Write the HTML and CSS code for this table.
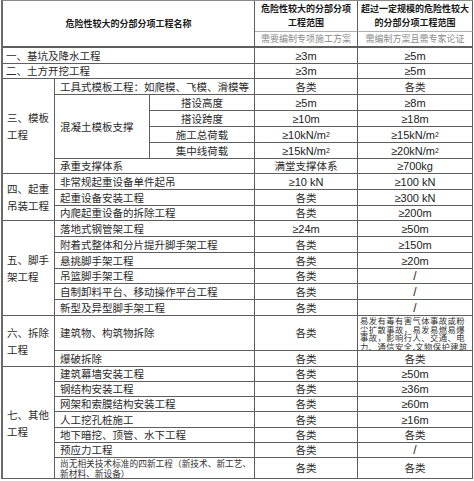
FILE: index.html
```html
<!DOCTYPE html>
<html lang="zh-CN">
<head>
<meta charset="utf-8">
<title>危险性较大的分部分项工程</title>
<link rel="stylesheet" href="styles.css">
</head>
<body>
<div class="sheet">
  <div class="cell hd s3 r2">危险性较大的分部分项工程名称</div>
  <div class="cell hd hd2">危险性较大的分部分项<br>工程范围</div>
  <div class="cell hd hd2">超过一定规模的危险性较大<br>的分部分项工程范围</div>
  <div class="cell sub">需要编制专项施工方案</div>
  <div class="cell sub">需编制方案且需专家论证</div>

  <div class="cell top s3">一、基坑及降水工程</div>
  <div class="cell num">≥3m</div>
  <div class="cell num">≥5m</div>

  <div class="cell top s3">二、土方开挖工程</div>
  <div class="cell num">≥3m</div>
  <div class="cell num">≥5m</div>

  <div class="cell cat r6">三、模板工程</div>
  <div class="cell nm s2">工具式模板工程：如爬模、飞模、滑模等</div>
  <div class="cell ctr">各类</div>
  <div class="cell ctr">各类</div>
  <div class="cell nm r4">混凝土模板支撑</div>
  <div class="cell ctr">搭设高度</div>
  <div class="cell num">≥5m</div>
  <div class="cell num">≥8m</div>
  <div class="cell ctr">搭设跨度</div>
  <div class="cell num">≥10m</div>
  <div class="cell num">≥18m</div>
  <div class="cell ctr">施工总荷载</div>
  <div class="cell num">≥10kN/m<sup>2</sup></div>
  <div class="cell num">≥15kN/m<sup>2</sup></div>
  <div class="cell ctr">集中线荷载</div>
  <div class="cell num">≥15kN/m<sup>2</sup></div>
  <div class="cell num">≥20kN/m<sup>2</sup></div>
  <div class="cell nm s2">承重支撑体系</div>
  <div class="cell ctr">满堂支撑体系</div>
  <div class="cell num">≥700kg</div>

  <div class="cell cat r3">四、起重吊装工程</div>
  <div class="cell nm s2">非常规起重设备单件起吊</div>
  <div class="cell num">≥10 kN</div>
  <div class="cell num">≥100 kN</div>
  <div class="cell nm s2">起重设备安装工程</div>
  <div class="cell ctr">各类</div>
  <div class="cell num">≥300 kN</div>
  <div class="cell nm s2">内爬起重设备的拆除工程</div>
  <div class="cell ctr">各类</div>
  <div class="cell num">≥200m</div>

  <div class="cell cat r6">五、脚手架工程</div>
  <div class="cell nm s2">落地式钢管架工程</div>
  <div class="cell num">≥24m</div>
  <div class="cell num">≥50m</div>
  <div class="cell nm s2">附着式整体和分片提升脚手架工程</div>
  <div class="cell ctr">各类</div>
  <div class="cell num">≥150m</div>
  <div class="cell nm s2">悬挑脚手架工程</div>
  <div class="cell ctr">各类</div>
  <div class="cell num">≥20m</div>
  <div class="cell nm s2">吊篮脚手架工程</div>
  <div class="cell ctr">各类</div>
  <div class="cell num slash">/</div>
  <div class="cell nm s2">自制卸料平台、移动操作平台工程</div>
  <div class="cell ctr">各类</div>
  <div class="cell num slash">/</div>
  <div class="cell nm s2">新型及异型脚手架工程</div>
  <div class="cell ctr">各类</div>
  <div class="cell num slash">/</div>

  <div class="cell cat r2">六、拆除工程</div>
  <div class="cell nm s2">建筑物、构筑物拆除</div>
  <div class="cell ctr">各类</div>
  <div class="cell note"><span class="note-text">易发有毒有害气体事故或粉<br>尘扩散事故，易发易燃易爆<br>事故，影响行人、交通、电<br>力、通信安全,文物保护建筑</span></div>
  <div class="cell nm s2">爆破拆除</div>
  <div class="cell ctr">各类</div>
  <div class="cell ctr">各类</div>

  <div class="cell cat r7">七、其他工程</div>
  <div class="cell nm s2">建筑幕墙安装工程</div>
  <div class="cell ctr">各类</div>
  <div class="cell num">≥50m</div>
  <div class="cell nm s2">钢结构安装工程</div>
  <div class="cell ctr">各类</div>
  <div class="cell num">≥36m</div>
  <div class="cell nm s2">网架和索膜结构安装工程</div>
  <div class="cell ctr">各类</div>
  <div class="cell num">≥60m</div>
  <div class="cell nm s2">人工挖孔桩施工</div>
  <div class="cell ctr">各类</div>
  <div class="cell num">≥16m</div>
  <div class="cell nm s2">地下暗挖、顶管、水下工程</div>
  <div class="cell ctr">各类</div>
  <div class="cell ctr">各类</div>
  <div class="cell nm s2">预应力工程</div>
  <div class="cell ctr">各类</div>
  <div class="cell num slash">/</div>
  <div class="cell nm s2 small"><span class="small-text">尚无相关技术标准的四新工程（新技术、新工艺、<br>新材料、新设备）</span></div>
  <div class="cell ctr">各类</div>
  <div class="cell ctr">各类</div>
</div>
</body>
</html>
```
FILE: styles.css
```css
html, body {
  margin: 0;
  padding: 0;
  background: #ffffff;
}
body {
  font-family: "Noto Sans CJK SC", "Noto Sans", sans-serif;
  color: #2a2a2a;
  font-size: 10.5px;
}
.sheet {
  margin-left: 1px;
  width: 470px;
  display: grid;
  grid-template-columns: 52px 95px 105px 103px 115px;
  grid-template-rows: 31px 16px 16px 15px 16px 16px 16px 16px 16px 15px 16px 16px 15px 16px 16px 16px 15px 16px 16px 35px 16px 15px 15px 15px 16px 15px 15px 21px;
  border-left: 2px solid #6a6a6a;
  border-top: 1px solid #8a8a8a;
}
.cell {
  box-sizing: border-box;
  border-right: 1px solid #5e5e5e;
  border-bottom: 1px solid #5e5e5e;
  display: flex;
  align-items: center;
  overflow: hidden;
  white-space: nowrap;
  line-height: 14px;
}
.s2 { grid-column: span 2; }
.s3 { grid-column: span 3; }
.r2 { grid-row: span 2; }
.r3 { grid-row: span 3; }
.r4 { grid-row: span 4; }
.r6 { grid-row: span 6; }
.r7 { grid-row: span 7; }

.hd {
  justify-content: center;
  text-align: center;
  font-weight: 700;
  font-size: 9px;
  color: #1a1a1a;
}
.hd2 {
  line-height: 14px;
  border-bottom-color: #b0b0b0;
}
.sub {
  justify-content: center;
  font-size: 9px;
  color: #8a8a8a;
  border-bottom-width: 2px;
}
.sheet > .hd.r2 { border-bottom-width: 2px; }

.top { padding-left: 3px; }
.nm { padding-left: 5px; }
.ctr { justify-content: center; }
.cat {
  padding-left: 4px;
  white-space: normal;
  line-height: 17px;
}
.num {
  justify-content: center;
  font-family: "Liberation Sans", "DejaVu Sans", sans-serif;
  font-size: 11px;
  color: #222;
}
.num sup {
  font-size: 7px;
  line-height: 0;
  vertical-align: 4px;
}
.slash { font-size: 12px; }
.note {
  padding: 0 1px 0 2px;
}
.note-text {
  display: block;
  white-space: nowrap;
  font-size: 8.3px;
  line-height: 8.5px;
  color: #333;
  letter-spacing: 0.45px;
}
.small {
  align-items: flex-start;
  padding-top: 1px;
}
.small-text {
  display: block;
  white-space: nowrap;
  font-size: 8.7px;
  line-height: 9.5px;
  color: #333;
}
```
